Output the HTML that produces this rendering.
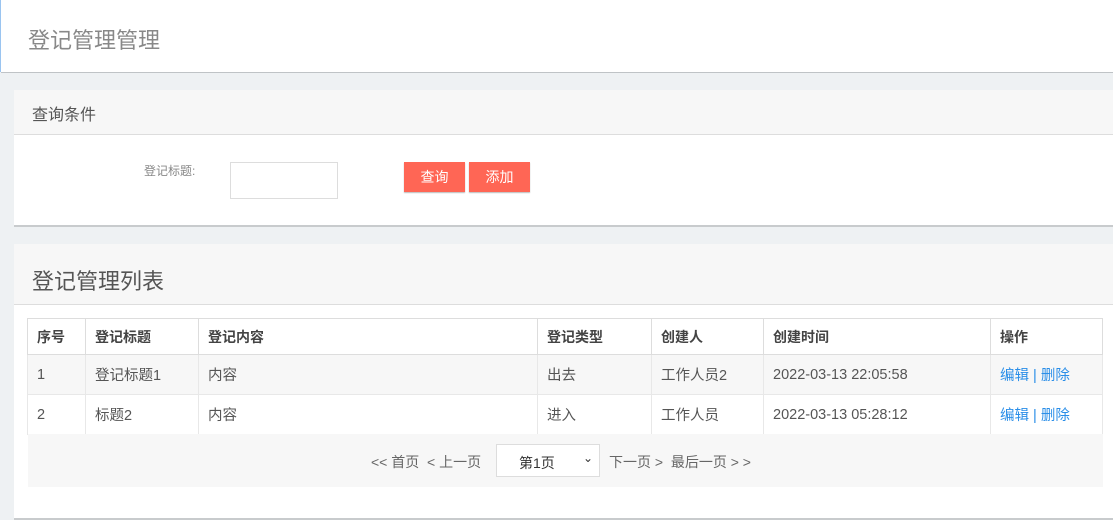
<!DOCTYPE html>
<html><head><meta charset="utf-8"><style>
*{box-sizing:border-box;margin:0;padding:0}
body{width:1113px;height:520px;background:#eef1f3;font-family:"Liberation Sans","Noto Sans CJK SC",sans-serif;position:relative;overflow:hidden;color:#555}
.top{position:absolute;left:1px;top:0;width:1112px;height:73px;background:#fff;border-bottom:1px solid #bfc3c6}
.top h1{position:absolute;left:27px;top:23px;font-size:22px;font-weight:normal;color:#888}
.p{position:absolute;left:14px;right:0;background:#fff;border-bottom:2px solid #c8cbcd}
.ph{background:#f7f7f7;border-bottom:1px solid #ddd;position:relative}
.lbl{position:absolute;left:144px;font-size:12px;color:#888}
.inp{position:absolute;left:230px;top:162px;width:108px;height:37px;border:1px solid #ddd;background:#fff}
.btn{position:absolute;top:162px;height:30px;background:#ff6655;color:#fff;font-size:14px;line-height:30px;text-align:center;box-shadow:0 1px 1px #bbb}
table{position:absolute;left:27px;top:318px;width:1076px;border-collapse:collapse;font-size:14px}
td,th{border:1px solid #e8e8e8;text-align:left;padding-left:9px}
th{height:36px;font-weight:bold;color:#444;border-color:#ddd}
td{height:40px;color:#555;font-size:14.5px}
tr.g td{background:#f7f7f7}
a{color:#2a8ee8;text-decoration:none}
.pg{position:absolute;left:28px;top:434px;width:1075px;height:53px;background:#f7f7f7;font-size:14px;color:#666}
</style></head><body>
<div style="position:absolute;left:0;top:0;width:2px;height:72px;background:#9ac4f0"></div>
<div class="top"><h1>登记管理管理</h1></div>
<div class="p" style="top:90px;height:137px">
<div class="ph" style="height:45px"><span style="position:absolute;left:18px;top:11px;font-size:16px;color:#555">查询条件</span></div>
</div>
<div class="lbl" style="top:162px">登记标题:</div>
<div class="inp"></div>
<div class="btn" style="left:404px;width:61px">查询</div>
<div class="btn" style="left:469px;width:61px">添加</div>
<div class="p" style="top:244px;height:276px">
<div class="ph" style="height:61px"><span style="position:absolute;left:18px;top:20px;font-size:22px;color:#555">登记管理列表</span></div>
</div>
<table>
<tr><th style="width:58px">序号</th><th style="width:113px">登记标题</th><th style="width:339px">登记内容</th><th style="width:114px">登记类型</th><th style="width:112px">创建人</th><th style="width:227px">创建时间</th><th>操作</th></tr>
<tr class="g"><td>1</td><td>登记标题1</td><td>内容</td><td>出去</td><td>工作人员2</td><td>2022-03-13 22:05:58</td><td><a>编辑</a> <span style="color:#2a8ee8">|</span> <a>删除</a></td></tr>
<tr><td>2</td><td>标题2</td><td>内容</td><td>进入</td><td>工作人员</td><td>2022-03-13 05:28:12</td><td><a>编辑</a> <span style="color:#2a8ee8">|</span> <a>删除</a></td></tr>
</table>
<div class="pg">
<span style="position:absolute;left:343px;top:18px">&lt;&lt; 首页 &nbsp;&lt; 上一页</span>
<div style="position:absolute;left:468px;top:10px;width:104px;height:33px;border:1px solid #ddd;background:#fff;font-size:14px;color:#333;padding:8px 0 0 22px">第1页<span style="position:absolute;right:6px;top:6px;font-size:12px">⌄</span></div>
<span style="position:absolute;left:581px;top:18px">下一页 &gt; &nbsp;最后一页 &gt; &gt;</span>
</div>
</body></html>
